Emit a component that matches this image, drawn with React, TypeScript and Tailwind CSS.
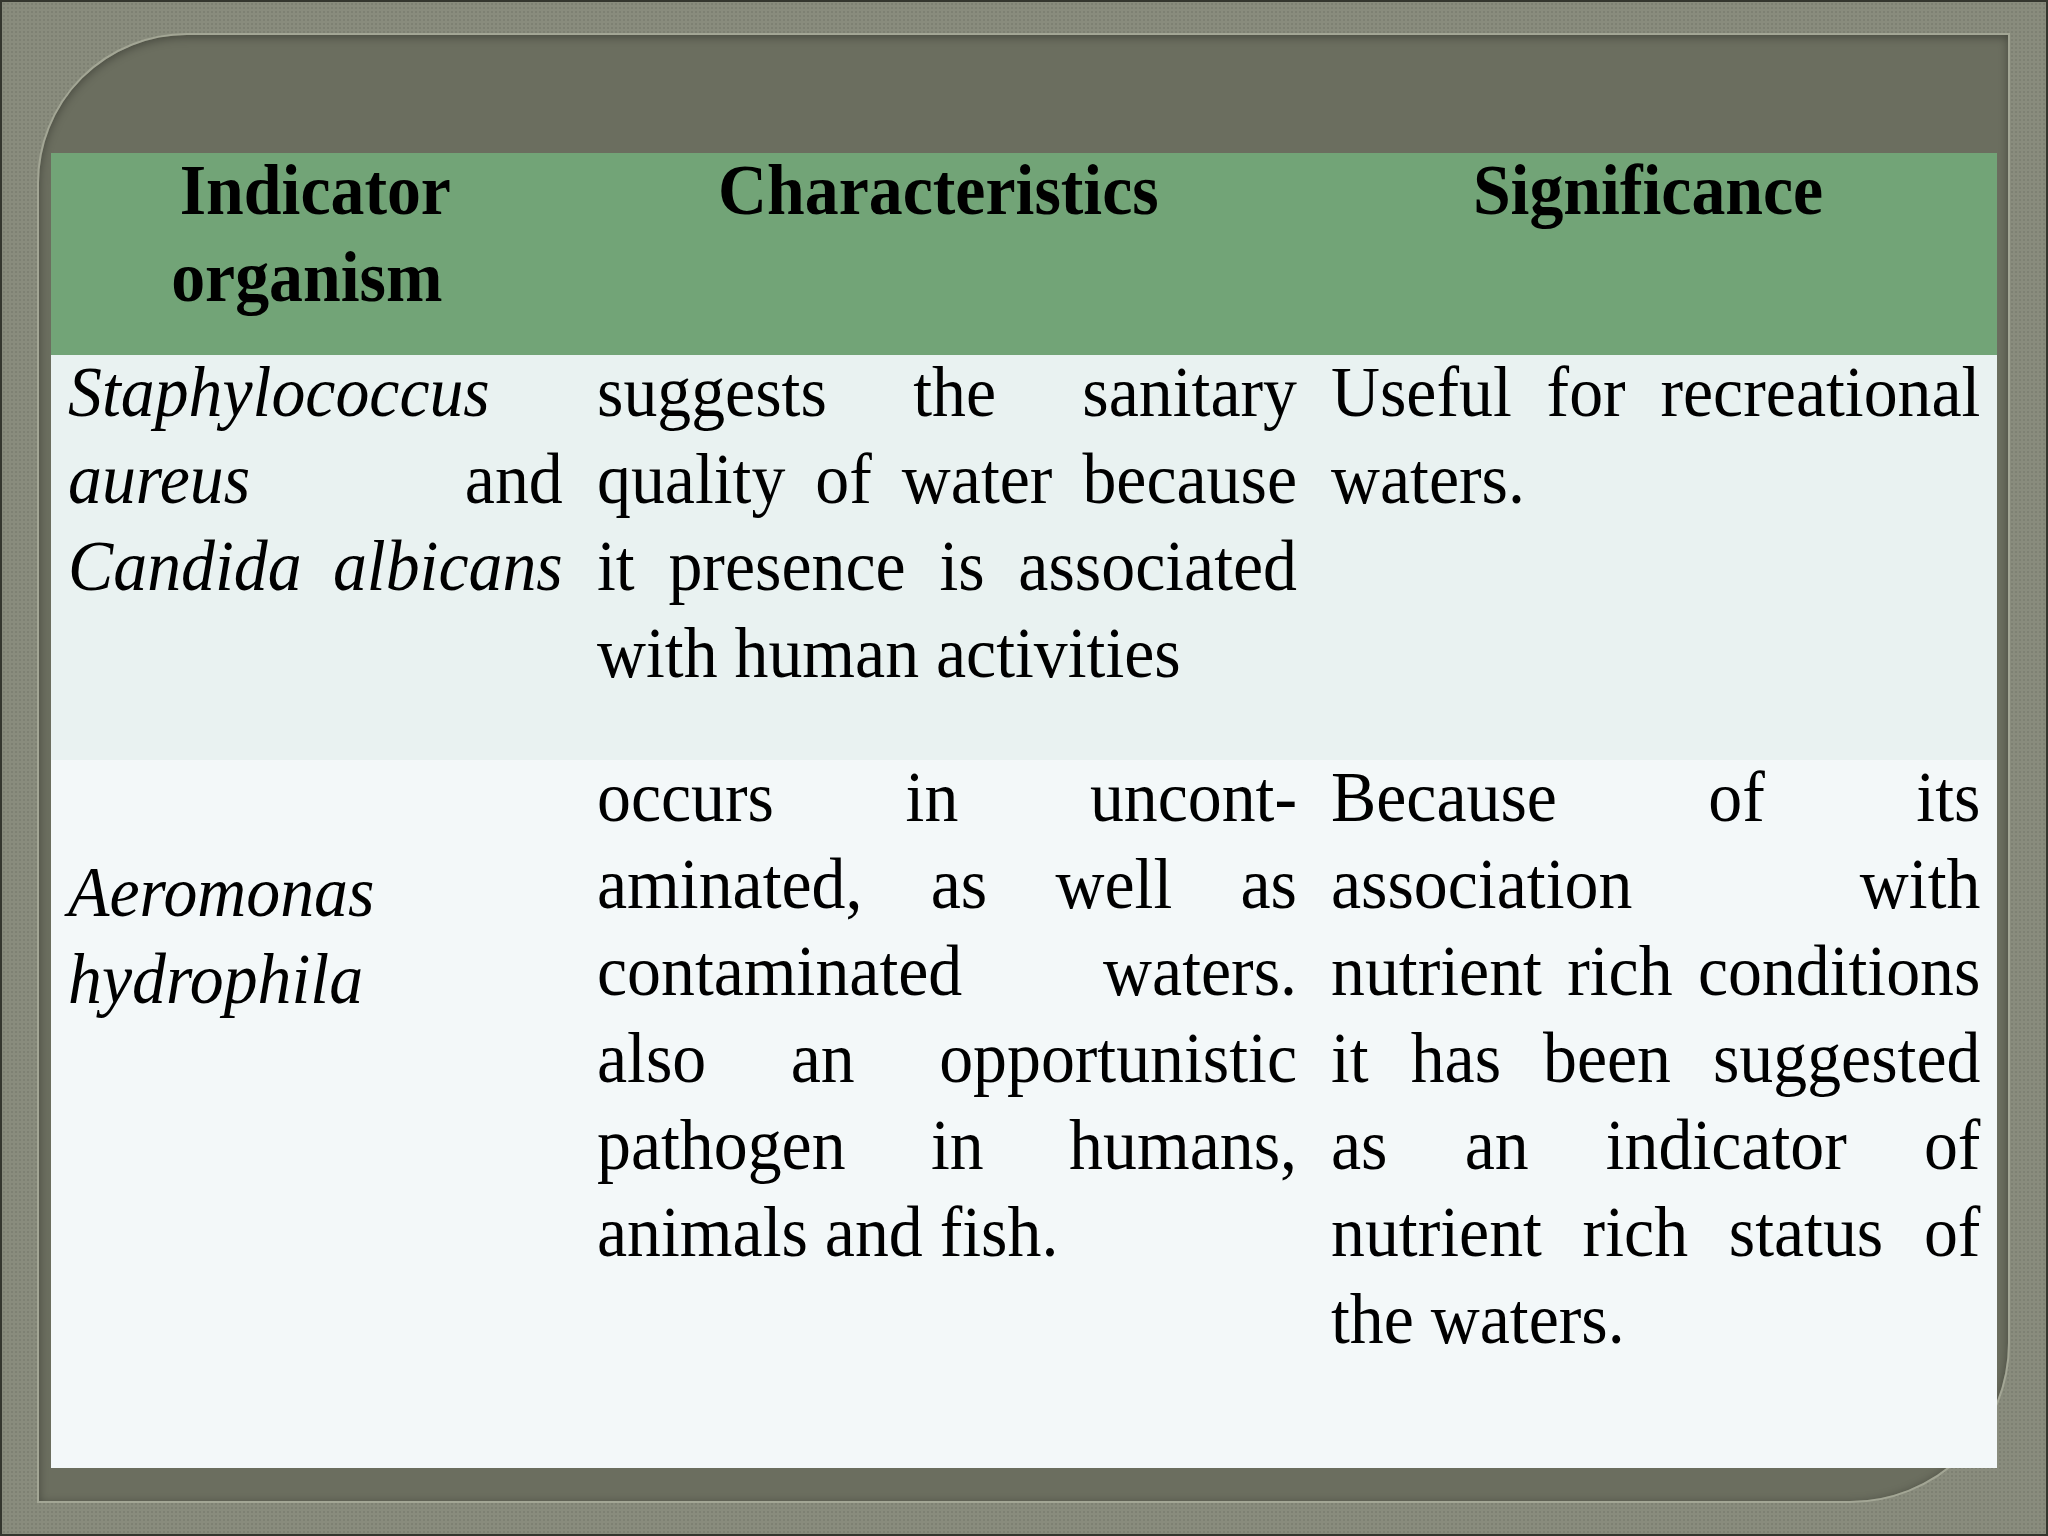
import React from 'react'

// one justified line (stretched to the column width)
const J = ({ children }: { children: React.ReactNode }) => (
  <div className="whitespace-nowrap text-justify [text-align-last:justify]">{children}</div>
)

// last line of a paragraph, left aligned
const L = ({ children }: { children: React.ReactNode }) => (
  <div className="whitespace-nowrap">{children}</div>
)

const Cell = ({ w, bg, children, extra = '' }: { w: string; bg: string; children: React.ReactNode; extra?: string }) => (
  <div className={`${bg} px-[17px] overflow-visible`}>
    <div className={`${w} ${extra} origin-left scale-x-[0.955] text-[71px] leading-[87px] text-black`}>{children}</div>
  </div>
)

const App = () => {
  return (
    <div className="w-[2048px] h-[1536px] border-2 border-[#34362e] bg-[#898c7d] bg-[image:radial-gradient(#7e8173_1px,transparent_1px)] bg-[size:4px_4px] pt-[31px] pl-[35px] pr-[36px] pb-[31px] flex font-['Liberation_Serif',serif]">
      <div className="flex-1 rounded-tl-[150px] rounded-br-[160px] bg-[#6b6e5f] border-2 border-[#a3a695] shadow-[inset_0_2px_10px_rgba(0,0,0,0.35)] pt-[118px] pl-[12px] pr-[11px]">
        <div className="grid grid-cols-[529px_734px_683px] grid-rows-[202px_405px_708px]">
          {/* header */}
          <Cell w="w-[518px]" bg="bg-[#72a477]" extra="-mt-[6px] text-center font-bold">
            <div>Indicator</div>
            <div className="-ml-[18px]">organism</div>
          </Cell>
          <Cell w="w-[733px]" bg="bg-[#72a477]" extra="-mt-[6px] text-center font-bold">
            <div className="-ml-[18px]">Characteristics</div>
          </Cell>
          <Cell w="w-[680px]" bg="bg-[#72a477]" extra="-mt-[6px] text-center font-bold">
            <div className="-ml-[16px]">Significance</div>
          </Cell>

          {/* row 1 */}
          <Cell w="w-[518px]" bg="bg-[#e9f2f1]" extra="-mt-[6px]">
            <L><i>Staphylococcus</i></L>
            <J><i>aureus</i> and</J>
            <J><i>Candida albicans</i></J>
          </Cell>
          <Cell w="w-[733px]" bg="bg-[#e9f2f1]" extra="-mt-[6px]">
            <J>suggests the sanitary</J>
            <J>quality of water because</J>
            <J>it presence is associated</J>
            <L>with human activities</L>
          </Cell>
          <Cell w="w-[680px]" bg="bg-[#e9f2f1]" extra="-mt-[6px]">
            <J>Useful for recreational</J>
            <L>waters.</L>
          </Cell>

          {/* row 2 */}
          <Cell w="w-[518px]" bg="bg-[#f3f8f9]" extra="mt-[89px] italic">
            <L>Aeromonas</L>
            <L>hydrophila</L>
          </Cell>
          <Cell w="w-[733px]" bg="bg-[#f3f8f9]" extra="-mt-[6px]">
            <J>occurs in uncont-</J>
            <J>aminated, as well as</J>
            <J>contaminated waters.</J>
            <J>also an opportunistic</J>
            <J>pathogen in humans,</J>
            <L>animals and fish.</L>
          </Cell>
          <Cell w="w-[680px]" bg="bg-[#f3f8f9]" extra="-mt-[6px]">
            <J>Because of its</J>
            <J>association with</J>
            <J>nutrient rich conditions</J>
            <J>it has been suggested</J>
            <J>as an indicator of</J>
            <J>nutrient rich status of</J>
            <L>the waters.</L>
          </Cell>
        </div>
      </div>
    </div>
  )
}

export default App
